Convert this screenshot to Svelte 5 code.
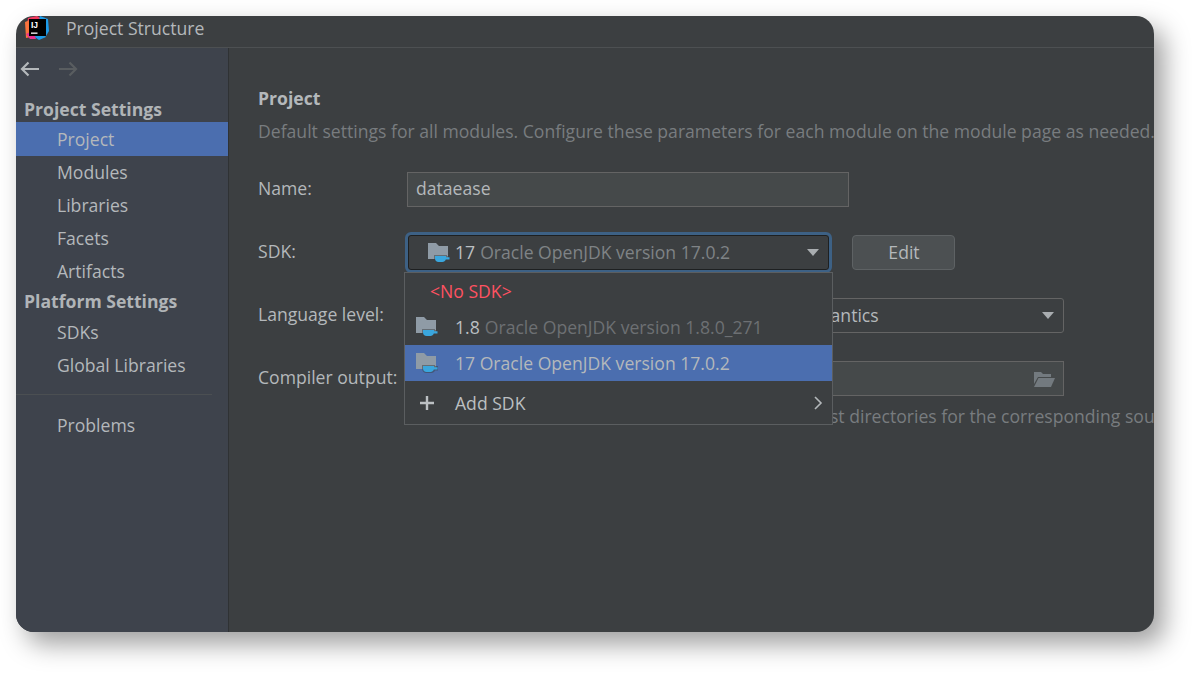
<script>
    const settings = ['Project', 'Modules', 'Libraries', 'Facets', 'Artifacts']
    const platform = ['SDKs', 'Global Libraries']
    let selected = $state('Project')
</script>

{#snippet jdkIcon()}
    <svg class="jdk" viewBox="0 0 22 20" width="22" height="20">
        <path d="M0 0h8l3 3h9v13H0z" fill="#8f9ba6"/>
        <path d="M6 12h13v1h3.500v4.500H19c-.5 1.500-2 2.500-3.500 2.500h-5C8 20 6 18 6 15.500z" fill="#3c3f41" opacity=".5"/>
        <path d="M7 13h11v1.200h3.500v2.300H17.800c-.5 1.500-1.800 2.500-3.300 2.500h-4C8.500 19 7 17.500 7 15.500z" fill="#3aa6dd"/>
    </svg>
{/snippet}

<div class="page">
    <div class="window">
        <header class="titlebar">
            <svg class="logo" viewBox="0 0 24 24" width="24" height="24">
                <path d="M3 2l9-2 5 3-6 6H2z" fill="#f03a5f"/>
                <path d="M15 0l8 3 1 12-3 5-8-12z" fill="#1d9be8"/>
                <path d="M0 6l5-2 2 3-1 14-5 1z" fill="#f9733d"/>
                <path d="M8 20l11-2 2 3-7 3z" fill="#1d9be8"/>
                <path d="M1 18l7-3 3 8-6 0z" fill="#e8328f"/>
                <rect x="4" y="3" width="17" height="17" fill="#000"/>
                <text x="6" y="11.500" class="logo-text">IJ</text>
                <rect x="6" y="16.500" width="6.500" height="1.300" fill="#fff"/>
            </svg>
            <span class="title">Project Structure</span>
        </header>

        <div class="body">
            <aside class="sidebar">
                <div class="nav-arrows">
                    <svg viewBox="0 0 20 16" width="20" height="16" fill="none" stroke="#b4b8bb" stroke-width="2.200">
                        <path d="M19 8H2M8.500 1.500L2 8l6.500 6.500"/>
                    </svg>
                    <svg viewBox="0 0 20 16" width="20" height="16" fill="none" stroke="#595d60" stroke-width="2.200">
                        <path d="M1 8h17M11.500 1.500L18 8l-6.500 6.500"/>
                    </svg>
                </div>

                <div class="group">Project Settings</div>
                {#each settings as item}
                    <button class="item" class:active={selected === item} onclick={() => (selected = item)}>{item}</button>
                {/each}

                <div class="group second">Platform Settings</div>
                {#each platform as item}
                    <button class="item" class:active={selected === item} onclick={() => (selected = item)}>{item}</button>
                {/each}

                <div class="separator"></div>
                <button class="item" class:active={selected === 'Problems'} onclick={() => (selected = 'Problems')}>Problems</button>
            </aside>

            <main class="content">
                <h1>Project</h1>
                <p class="hint">Default settings for all modules. Configure these parameters for each module on the module page as needed.</p>

                <div class="row name-row">
                    <span class="label">Name:</span>
                    <div class="field name-field">dataease</div>
                </div>

                <div class="row sdk-row">
                    <span class="label">SDK:</span>
                    <div class="sdk-wrap">
                        <div class="combo focused">
                            {@render jdkIcon()}
                            <span class="version">17</span>
                            <span class="dim">Oracle OpenJDK version 17.0.2</span>
                            <span class="caret"></span>
                        </div>

                        <div class="popup">
                            <div class="option none">&lt;No SDK&gt;</div>
                            <div class="option jdk-option">
                                {@render jdkIcon()}
                                <span class="version">1.8</span>
                                <span class="dimmer">Oracle OpenJDK version 1.8.0_271</span>
                            </div>
                            <div class="option jdk-option current">
                                {@render jdkIcon()}
                                <span>17 Oracle OpenJDK version 17.0.2</span>
                            </div>
                            <div class="divider"></div>
                            <div class="option add">
                                <svg viewBox="0 0 14 14" width="14" height="14" stroke="#bcc0c3" stroke-width="2.400">
                                    <path d="M7 0v14M0 7h14"/>
                                </svg>
                                <span>Add SDK</span>
                                <svg class="chevron" viewBox="0 0 10 14" width="10" height="14" fill="none" stroke="#b4b8bb" stroke-width="1.600">
                                    <path d="M2 1l6 6-6 6"/>
                                </svg>
                            </div>
                        </div>
                    </div>
                    <button class="edit">Edit</button>
                </div>

                <div class="row level-row">
                    <span class="label">Language level:</span>
                    <div class="combo level">
                        <span class="level-text">17 - Sealed types, always-strict floating-point semantics</span>
                        <span class="caret"></span>
                    </div>
                </div>

                <div class="row output-row">
                    <span class="label">Compiler output:</span>
                    <div class="field output">
                        <svg viewBox="0 0 22 16" width="22" height="16">
                            <path d="M1 1h7l2 2h8v3H5L1 13z" fill="#737a7f"/>
                            <path d="M5.500 7H22l-4 9H1z" fill="#737a7f"/>
                        </svg>
                    </div>
                </div>

                <p class="hint note">Used for module subdirectories, Production and Test directories for the corresponding sources.</p>
            </main>
        </div>
    </div>
</div>

<style>
    :global(body) {
        background: #fff;
        overflow: hidden;
    }

    .page {
        width: 1200px;
        height: 678px;
        padding: 16px 46px 46px 16px;
        box-sizing: border-box;
        font-family: "Open Sans", "Noto Sans", sans-serif;
        font-size: 17.600px;
        color: #b4b8bb;
    }

    .window {
        height: 100%;
        display: flex;
        flex-direction: column;
        border-radius: 18px;
        overflow: hidden;
        background: #3c3f41;
        box-shadow: 10px 12px 26px rgba(0, 0, 0, 0.38);
    }

    .titlebar {
        height: 32px;
        flex: none;
        display: flex;
        align-items: center;
        padding: 0 0 7px 9px;
        box-sizing: border-box;
        border-bottom: 1px solid #4d5052;
    }

    .logo {
        flex: none;
    }

    .logo-text {
        font-family: "Liberation Sans", sans-serif;
        font-size: 8.500px;
        font-weight: 700;
        fill: #fff;
    }

    .title {
        margin-left: 17px;
    }

    .body {
        flex: 1;
        display: flex;
        min-height: 0;
    }

    .sidebar {
        width: 213px;
        box-sizing: border-box;
        flex: none;
        display: flex;
        flex-direction: column;
        background: #3e434c;
        border-right: 1px solid #2f3234;
    }

    .nav-arrows {
        height: 41px;
        display: flex;
        align-items: center;
        gap: 18px;
        padding: 0 0 0 4px;
        box-sizing: border-box;
    }

    .group {
        height: 33px;
        line-height: 40px;
        padding-left: 8px;
        font-weight: 700;
        color: #b0b4b7;
    }

    .group.second {
        height: 28px;
        line-height: 28px;
    }

    .item {
        height: 33px;
        flex: none;
        padding: 0 0 0 41px;
        border: 0;
        background: none;
        font: inherit;
        color: inherit;
        text-align: left;
    }

    .item.active {
        height: 34px;
        margin-bottom: -1px;
        background: #4b6eaf;
    }

    .separator {
        height: 1px;
        margin: 13px 16px 13px 0;
        background: #4b4f52;
    }

    .content {
        flex: 1;
        min-width: 0;
        padding: 38px 0 0 29px;
        overflow: hidden;
        white-space: nowrap;
    }

    h1 {
        margin: 0;
        font-size: inherit;
        font-weight: 700;
        line-height: 24px;
        color: #b4b8bb;
    }

    .hint {
        margin: 9px 0 0;
        line-height: 24px;
        color: #787c7f;
    }

    .row {
        display: flex;
        align-items: center;
    }

    .label {
        width: 149px;
        flex: none;
        padding-bottom: 3px;
    }

    .name-row {
        margin-top: 29px;
    }

    .sdk-row {
        margin-top: 28px;
    }

    .level-row {
        margin-top: 28px;
    }

    .output-row {
        margin-top: 28px;
    }

    .field {
        height: 35px;
        box-sizing: border-box;
        display: flex;
        align-items: center;
        border: 1px solid #646464;
        background: #45494a;
    }

    .name-field {
        width: 442px;
        padding: 0 0 3px 8px;
    }

    .sdk-wrap {
        position: relative;
        width: 423px;
        flex: none;
    }

    .combo {
        height: 35px;
        box-sizing: border-box;
        display: flex;
        align-items: center;
        gap: 5px;
        border: 1px solid #646464;
        border-radius: 3px;
        background: #3c3f41;
        overflow: hidden;
    }

    .combo.focused {
        border: 1px solid #1e2021;
        outline: 3px solid #3d6185;
        outline-offset: 0;
        margin: 0 1px;
        padding-left: 19px;
    }

    .combo .version,
    .combo .dim,
    .level-text {
        margin-bottom: 2px;
    }

    .jdk {
        flex: none;
    }

    .version {
        color: #bbbfc2;
    }

    .dim {
        color: #7f8386;
    }

    .dimmer {
        color: #6d7073;
    }

    .caret {
        width: 0;
        height: 0;
        margin-left: auto;
        margin-right: 9px;
        flex: none;
        border-left: 6.500px solid transparent;
        border-right: 6.500px solid transparent;
        border-top: 7px solid #a9adb0;
    }

    .popup {
        position: absolute;
        top: 37px;
        left: -3px;
        width: 429px;
        height: 153px;
        box-sizing: border-box;
        display: flex;
        flex-direction: column;
        border: 1px solid #5b5e60;
        background: #3c3f41;
        z-index: 2;
    }

    .option {
        display: flex;
        align-items: center;
        flex: none;
    }

    .none {
        height: 36px;
        padding-left: 25px;
        padding-bottom: 1px;
        box-sizing: border-box;
        color: #ff5261;
    }

    .jdk-option {
        height: 36px;
        padding-left: 11px;
        gap: 5px;
    }

    .jdk-option .jdk {
        margin-right: 12px;
    }

    .current {
        background: #4b6eaf;
    }

    .divider {
        height: 1px;
        margin-top: 2px;
        background: #4d5052;
    }

    .add {
        height: 41px;
        padding: 0 9px 1px 15px;
        box-sizing: border-box;
        gap: 21px;
        color: #bbbfc2;
    }

    .chevron {
        margin-left: auto;
    }

    .edit {
        width: 103px;
        height: 35px;
        margin-left: 22px;
        padding: 0 0 2px 1px;
        border: 1px solid #5e6264;
        border-radius: 4px;
        background: #4c5052;
        font: inherit;
        color: #b4b8bb;
    }

    .level {
        width: 657px;
        padding-left: 20px;
        gap: 0;
    }

    .level-text {
        white-space: nowrap;
    }

    .output {
        width: 657px;
        justify-content: flex-end;
        padding-right: 8px;
    }

    .note {
        margin: 8px 0 0 153px;
    }
</style>
